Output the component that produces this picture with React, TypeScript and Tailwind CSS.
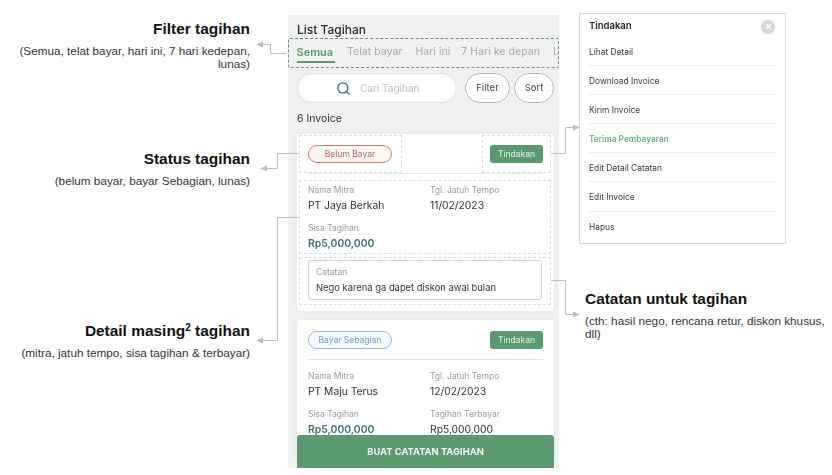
import { Search, X } from "lucide-react";

const actions = [
  { label: "Lihat Detail" },
  { label: "Download Invoice" },
  { label: "Kirim Invoice" },
  { label: "Terima Pembayaran", green: true },
  { label: "Edit Detail Catatan" },
  { label: "Edit Invoice" },
  { label: "Hapus" },
];

const tabs = [
  { label: "Telat bayar", ml: "ml-[12.5px]" },
  { label: "Hari ini", ml: "ml-[13px]" },
  { label: "7 Hari ke depan", ml: "ml-[11px]" },
  { label: "Lunas", ml: "ml-[13px]" },
];

function Field({ label, value, strong }: { label: string; value: string; strong?: boolean }) {
  return (
    <div className="w-[122px] shrink-0">
      <div className="text-[8.5px] leading-[12px] text-[#9a9a9a]">{label}</div>
      <div
        className={
          strong
            ? "mt-[2px] text-[10.4px] leading-[15px] font-semibold text-[#3f6f70]"
            : "mt-[2px] text-[10.3px] leading-[15px] text-[#333]"
        }
      >
        {value}
      </div>
    </div>
  );
}

function Tindakan() {
  return (
    <div className="flex h-[18px] w-[53px] items-center justify-center rounded-[3px] bg-[#5a9a6e] text-[8.5px] text-[#e6f2e9]">
      Tindakan
    </div>
  );
}

function Note({ title, children, right }: { title: React.ReactNode; children: React.ReactNode; right?: boolean }) {
  return (
    <div className={right ? "text-left" : "text-right"}>
      <div className="text-[15.45px] leading-[18px] font-bold text-[#111]">{title}</div>
      <div className="mt-[6px] text-[11.75px] leading-[13px] text-[#333]">{children}</div>
    </div>
  );
}

export default function App() {
  return (
    <div className="relative flex h-[475px] w-[832px] overflow-hidden bg-white font-['Liberation_Sans',sans-serif]">
      {/* left notes */}
      <div className="w-[288px] shrink-0 pr-[38px] pt-[20px]">
        <Note title="Filter tagihan">
          (Semua, telat bayar, hari ini, 7 hari kedepan,
          <br />
          lunas)
        </Note>
        <div className="mt-[80px]">
          <Note title="Status tagihan">(belum bayar, bayar Sebagian, lunas)</Note>
        </div>
        <div className="mt-[135px]">
          <Note
            title={
              <>
                Detail masing<sup className="text-[10px] leading-none">2</sup> tagihan
              </>
            }
          >
            (mitra, jatuh tempo, sisa tagihan &amp; terbayar)
          </Note>
        </div>
      </div>

      {/* phone */}
      <div className="relative mt-[15px] h-[453px] w-[271px] shrink-0 overflow-hidden bg-[#f1f1f1] font-['Inter',sans-serif] blur-[0.4px]">
        <div className="pl-[9px] pt-[7px] text-[12px] leading-[16px] font-medium text-[#2b2b2b]">List Tagihan</div>
        <div className="flex h-[30px] overflow-hidden rounded-[2px] border-[1.5px] border-dashed border-[#5f9296] pl-[7.5px] pt-[5px] text-[10.6px] whitespace-nowrap text-[#a8a8a8]">
          <div className="h-[19px] w-[38px] shrink-0 border-b-2 border-[#5a9a6e] text-[11px] font-semibold text-[#5a9a6e]">Semua</div>
          {tabs.map((t) => (
            <div key={t.label} className={t.ml}>
              {t.label}
            </div>
          ))}
        </div>

        <div className="mt-[5px] flex pl-[9px]">
          <div className="flex h-[30px] w-[160px] items-center rounded-full border border-[#dfe5e3] bg-white pl-[38px]">
            <Search size={15} strokeWidth={2.2} className="text-[#3f7374]" />
            <span className="ml-[9px] text-[10px] text-[#bdbdbd]">Cari Tagihan</span>
          </div>
          <div className="ml-[8px] flex h-[30px] w-[45px] items-center justify-center rounded-full border border-[#b5b5b5] bg-white text-[9.5px] text-[#444]">
            Filter
          </div>
          <div className="ml-[4px] flex h-[30px] w-[40px] items-center justify-center rounded-full border border-[#b5b5b5] bg-white text-[9.5px] text-[#444]">
            Sort
          </div>
        </div>

        <div className="mt-[9px] pl-[9px] text-[10.5px] leading-[14px] text-[#333]">6 Invoice</div>

        {/* card 1 */}
        <div className="ml-[9px] mt-[8px] h-[177px] w-[257px] rounded-[3px] bg-white px-[2px] pt-[1px] shadow-[0_0_6px_rgba(0,0,0,0.05)]">
          <div className="flex justify-between pr-[1px]">
            <div className="flex h-[38px] w-[103px] items-center border border-dashed border-[#cfe5df] pl-[8px]">
              <div className="flex h-[18px] w-[84px] items-center justify-center rounded-full border border-[#d77a72] bg-[#fdf6f5] text-[8.5px] text-[#c9655d]">
                Belum Bayar
              </div>
            </div>
            <div className="flex h-[38px] w-[69px] items-center justify-center border border-dashed border-[#cfe5df]">
              <Tindakan />
            </div>
          </div>
          <div className="mx-[9px] h-px bg-[#e6e6e6]" />
          <div className="mt-[6px] h-[74px] w-[252px] border border-dashed border-[#cfe5df] pl-[8px] pt-[3px]">
            <div className="flex">
              <Field label="Nama Mitra" value="PT Jaya Berkah" />
              <Field label="Tgl. Jatuh Tempo" value="11/02/2023" />
            </div>
            <div className="mt-[9px]">
              <Field label="Sisa Tagihan" value="Rp5,000,000" strong />
            </div>
          </div>
          <div className="mt-[3px] h-[48px] w-[252px] border border-dashed border-[#cfe5df] px-[8px] pt-[2px]">
            <div className="h-[40px] rounded-[3px] border border-[#d4d4d4] px-[7px] pt-[5px]">
              <div className="text-[8.5px] leading-[12px] text-[#9a9a9a]">Catatan</div>
              <div className="mt-[3px] text-[9.4px] leading-[13px] text-[#333]">Nego karena ga dapet diskon awal bulan</div>
            </div>
          </div>
        </div>

        {/* card 2 */}
        <div className="ml-[9px] mt-[9px] h-[140px] w-[257px] rounded-[3px] bg-white px-[11px] pt-[11px] shadow-[0_0_6px_rgba(0,0,0,0.05)]">
          <div className="flex justify-between">
            <div className="flex h-[18px] w-[84px] items-center justify-center rounded-full border border-[#8db6e6] bg-[#f6faff] text-[8.5px] text-[#6d9fd8]">
              Bayar Sebagian
            </div>
            <Tindakan />
          </div>
          <div className="mt-[10px] h-px bg-[#e2e2e2]" />
          <div className="mt-[10px] flex">
            <Field label="Nama Mitra" value="PT Maju Terus" />
            <Field label="Tgl. Jatuh Tempo" value="12/02/2023" />
          </div>
          <div className="mt-[9px] flex">
            <Field label="Sisa Tagihan" value="Rp5,000,000" strong />
            <Field label="Tagihan Terbayar" value="Rp5,000,000" />
          </div>
        </div>

        <div className="absolute bottom-0 left-[9px] flex h-[33px] w-[257px] items-center justify-center rounded-t-[3px] bg-[#5a9a6e] pt-px text-[9.4px] font-bold text-[#f2f7f3]">
          BUAT CATATAN TAGIHAN
        </div>
      </div>

      {/* right side */}
      <div className="ml-[20px] w-[253px] shrink-0 pt-[13px]">
        <div className="h-[231px] w-[207px] border border-[#d6d6d6] bg-white px-[9px] font-['Inter',sans-serif] blur-[0.3px]">
          <div className="flex h-[23px] items-center justify-between pr-[1px] pt-[2px] text-[9.5px] font-semibold text-[#222]">
            Tindakan
            <div className="flex h-[14px] w-[14px] items-center justify-center rounded-full bg-[#d6d6d6]">
              <X size={9} strokeWidth={3} className="text-white" />
            </div>
          </div>
          {actions.map((a, i) => (
            <div
              key={a.label}
              className={
                (a.green ? "font-medium text-[#5aa878] " : "text-[#3a3a3a] ") +
                (i < actions.length - 1 ? "border-b border-[#ececec] " : "") +
                "flex h-[29.1px] items-center pt-[2px] text-[8.4px]"
              }
            >
              {a.label}
            </div>
          ))}
        </div>
        <div className="ml-[6px] mt-[46px]">
          <Note title="Catatan untuk tagihan" right>
            (cth: hasil nego, rencana retur, diskon khusus,
            <br />
            dll)
          </Note>
        </div>
      </div>

      {/* connector lines */}
      <svg className="absolute left-0 top-0" width="832" height="475" fill="none" stroke="#bdbdbd" strokeWidth="1">
        <path d="M286 53.5H270.5V44.5H262" />
        <path d="M299 153.5H277.5V168.5H266" />
        <path d="M299 217.5H277.5V340.5H262" />
        <path d="M551 153.5H565.5V127.5H574" />
        <path d="M551 280.5H565.5V314.5H574" />
        <g fill="#bdbdbd" stroke="none">
          <path d="M256 44.5L263 41.5V47.5Z" />
          <path d="M260 168.5L267 165.5V171.5Z" />
          <path d="M256 340.5L263 337.5V343.5Z" />
          <path d="M580 127.5L573 124.5V130.5Z" />
          <path d="M580 314.5L573 311.5V317.5Z" />
        </g>
      </svg>
    </div>
  );
}
